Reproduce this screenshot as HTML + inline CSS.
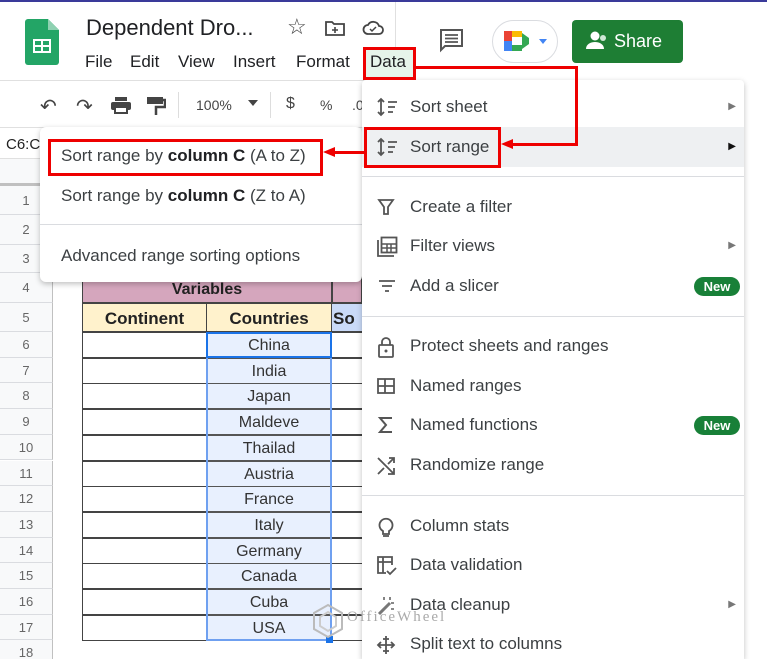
<!DOCTYPE html>
<html><head><meta charset="utf-8"><style>
*{margin:0;padding:0;box-sizing:border-box}
html{width:767px;height:659px;overflow:hidden}
body{width:767px;height:659px;overflow:hidden;background:#fff;font-family:"Liberation Sans",Arial,sans-serif;position:relative;color:#3c4043}
.a{position:absolute}
.mi{position:absolute;left:0;width:382px;height:40px;font-size:17px;color:#3c4043;line-height:40px}
.mi .t{position:absolute;left:48px;top:0}
.mi svg{position:absolute;left:14px;top:10px}
.arr{position:absolute;right:8px;top:0;font-size:10px;color:#777}
.new{position:absolute;left:332px;top:11px;width:46px;height:19px;border-radius:10px;background:#188038;color:#fff;font-size:13px;font-weight:bold;line-height:19px;text-align:center}
.sep{position:absolute;left:0;width:382px;height:1px;background:#dadce0}
.rh{position:absolute;left:0;width:53px;background:#f8f9fa;border-bottom:1px solid #dadce0;border-right:1px solid #c0c0c0;font-size:13px;color:#666;text-align:center}
.cell{position:absolute;font-size:16px;text-align:center;color:#222}
</style></head><body>
<div class="a" style="left:0;top:0;width:767px;height:2px;background:#3a3a9a"></div>
<div class="a" style="left:395px;top:2px;width:1px;height:78px;background:#e0e0e0"></div>
<div class="a" style="left:0;top:80px;width:395px;height:1px;background:#e0e0e0"></div>
<svg class="a" style="left:25px;top:19px" width="34" height="46" viewBox="0 0 34 46"><path d="M3 0h20l11 11v32a3 3 0 0 1-3 3H3a3 3 0 0 1-3-3V3a3 3 0 0 1 3-3z" fill="#23a566"/><path d="M23 0v11h11z" fill="#8ed1b1"/><rect x="8" y="20" width="18" height="14" fill="#fff"/><rect x="10" y="22" width="6" height="4" fill="#23a566"/><rect x="18" y="22" width="6" height="4" fill="#23a566"/><rect x="10" y="28" width="6" height="4" fill="#23a566"/><rect x="18" y="28" width="6" height="4" fill="#23a566"/></svg>
<div class="a" style="left:86px;top:15px;font-size:22px;color:#202124">Dependent Dro...</div>
<div class="a" style="left:287px;top:14px;font-size:22px;color:#444">☆</div>
<svg class="a" style="left:325px;top:20px" width="20" height="16"><path d="M1 2h6l2 2h10v11H1z" fill="none" stroke="#444" stroke-width="1.8"/><path d="M10 7v6M7 10h6" stroke="#444" stroke-width="1.6"/></svg>
<svg class="a" style="left:362px;top:20px" width="22" height="16"><path d="M6 14h11a4 4 0 0 0 0-8 6 6 0 0 0-11-1 4.5 4.5 0 0 0 0 9z" fill="none" stroke="#444" stroke-width="1.8"/><path d="M8 9l2 2 4-4" fill="none" stroke="#444" stroke-width="1.5"/></svg>
<div class="a" style="left:85px;top:52px;font-size:17px;color:#202124">File</div>
<div class="a" style="left:130px;top:52px;font-size:17px;color:#202124">Edit</div>
<div class="a" style="left:178px;top:52px;font-size:17px;color:#202124">View</div>
<div class="a" style="left:233px;top:52px;font-size:17px;color:#202124">Insert</div>
<div class="a" style="left:296px;top:52px;font-size:17px;color:#202124">Format</div>
<div class="a" style="left:364px;top:48px;width:51px;height:31px;background:#e6f4ea"></div>
<div class="a" style="left:370px;top:52px;font-size:17px;color:#202124">Data</div>
<svg class="a" style="left:439px;top:28px" width="26" height="26"><path d="M2 2h21v16H6l-4 4z" fill="none" stroke="#555" stroke-width="2"/><path d="M6 7h13M6 10.5h13M6 14h13" stroke="#555" stroke-width="1.8"/></svg>
<div class="a" style="left:492px;top:20px;width:66px;height:43px;border:1px solid #dadce0;border-radius:22px;background:#fff"></div>
<svg class="a" style="left:503px;top:30px" width="48" height="24"><rect x="1" y="1" width="8" height="10" fill="#ea4335"/><rect x="9" y="1" width="10" height="6" fill="#fbbc04"/><rect x="1" y="11" width="8" height="10" fill="#4285f4"/><rect x="9" y="15" width="10" height="6" fill="#34a853"/><path d="M19 3v16l7-5V8z" fill="#34a853"/><rect x="9" y="7" width="10" height="8" fill="#fff"/><path d="M36 9h8l-4 5z" fill="#4285f4"/></svg>
<div class="a" style="left:572px;top:20px;width:111px;height:43px;background:#1e7e34;border-radius:4px;color:#fff;font-size:18px;line-height:43px;padding-left:42px">Share</div>
<svg class="a" style="left:586px;top:30px" width="24" height="22"><circle cx="9" cy="6" r="4.5" fill="#fff"/><path d="M0 19c0-5 5-7 9-7s9 2 9 7z" fill="#fff"/><circle cx="17" cy="8" r="3" fill="#cfe8d6"/></svg>
<div class="a" style="left:40px;top:94px;font-size:20px;color:#444">↶</div>
<div class="a" style="left:76px;top:94px;font-size:20px;color:#444">↷</div>
<svg class="a" style="left:110px;top:96px" width="22" height="18"><rect x="5" y="1" width="12" height="4" fill="#444"/><rect x="1" y="6" width="20" height="8" rx="2" fill="#444"/><rect x="5" y="11" width="12" height="6" fill="#fff" stroke="#444" stroke-width="2"/></svg>
<svg class="a" style="left:146px;top:96px" width="20" height="20"><rect x="1" y="1" width="16" height="7" fill="#444"/><path d="M17 4h2v7h-9v8" fill="none" stroke="#444" stroke-width="2.5"/></svg>
<div class="a" style="left:178px;top:92px;width:1px;height:26px;background:#ddd"></div>
<div class="a" style="left:196px;top:97px;font-size:14px;color:#444">100%</div>
<div class="a" style="left:248px;top:100px;border:5px solid transparent;border-top:6px solid #444"></div>
<div class="a" style="left:270px;top:92px;width:1px;height:26px;background:#ddd"></div>
<div class="a" style="left:286px;top:95px;font-size:16px;color:#444">$</div>
<div class="a" style="left:320px;top:97px;font-size:14px;color:#444">%</div>
<div class="a" style="left:352px;top:97px;font-size:14px;color:#444">.0</div>
<div class="a" style="left:0;top:127px;width:362px;height:1px;background:#e0e0e0"></div>
<div class="a" style="left:6px;top:136px;font-size:15px;color:#222">C6:C</div>
<div class="a" style="left:0;top:158px;width:362px;height:1px;background:#e0e0e0"></div>
<div class="a" style="left:0;top:159px;width:362px;height:27px;background:#f8f9fa;border-bottom:3px solid #c0c0c0"></div>
<div class="rh" style="top:186px;height:29px;line-height:29px">1</div>
<div class="rh" style="top:215px;height:30px;line-height:30px">2</div>
<div class="rh" style="top:245px;height:28px;line-height:28px">3</div>
<div class="rh" style="top:273px;height:30px;line-height:30px">4</div>
<div class="rh" style="top:303px;height:29px;line-height:29px">5</div>
<div id="rows"></div>
<div class="a" style="left:82px;top:275px;width:280px;height:28px;background:#d5a6bd;border:1.5px solid #444"></div>
<div class="cell" style="left:82px;top:281px;width:250px;font-weight:bold">Variables</div>
<div class="a" style="left:331px;top:275px;width:1.5px;height:28px;background:#444"></div>
<div class="a" style="left:82px;top:303px;width:125px;height:29px;background:#fff2cc;border:1.5px solid #444"></div>
<div class="a" style="left:206px;top:303px;width:126px;height:29px;background:#fff2cc;border:1.5px solid #444"></div>
<div class="a" style="left:331px;top:303px;width:31px;height:29px;background:#c9daf8;border:1.5px solid #444;border-right:none"></div>
<div class="cell" style="left:82px;top:309px;width:125px;font-weight:bold;font-size:17px">Continent</div>
<div class="cell" style="left:206px;top:309px;width:126px;font-weight:bold;font-size:17px">Countries</div>
<div class="cell" style="left:333px;top:309px;font-weight:bold;text-align:left;font-size:17px">So</div>
<script>
var n=["China","India","Japan","Maldeve","Thailad","Austria","France","Italy","Germany","Canada","Cuba","USA"],h="";
for(var i=0;i<13;i++){var y=332+i*25.7;
h+='<div class="rh" style="top:'+y+'px;height:25.7px;line-height:25.7px">'+(i+6)+'</div>';
if(i<12){h+='<div class="a" style="left:82px;top:'+y+'px;width:125px;height:26px;border:1.5px solid #444;background:#fff"></div>';
h+='<div class="a" style="left:206px;top:'+y+'px;width:126px;height:26px;border:1px solid #555;background:#e8f0fe"></div>';
h+='<div class="a" style="left:331px;top:'+y+'px;width:31px;height:26px;border-top:1.5px solid #444;border-bottom:1.5px solid #444"></div>';
h+='<div class="cell" style="left:206px;top:'+(y+5)+'px;width:126px;color:#333">'+n[i]+'</div>';}}
h+='<div class="a" style="left:206px;top:332px;width:126px;height:309px;border:2px solid #6fa0f0"></div>';
h+='<div class="a" style="left:206px;top:332px;width:126px;height:26px;border:2px solid #1a73e8"></div>';
h+='<div class="a" style="left:326px;top:636px;width:7px;height:7px;background:#1a73e8"></div>';
document.getElementById("rows").innerHTML=h;
</script>
<div class="a" style="left:40px;top:127px;width:322px;height:155px;background:#fff;border-radius:6px;box-shadow:0 2px 6px rgba(0,0,0,.25)"></div>
<div class="a" style="left:61px;top:146px;font-size:17px;color:#3c4043">Sort range by <b style="color:#202124">column C</b> (A to Z)</div>
<div class="a" style="left:61px;top:186px;font-size:17px;color:#3c4043">Sort range by <b style="color:#202124">column C</b> (Z to A)</div>
<div class="a" style="left:40px;top:224px;width:322px;height:1px;background:#dadce0"></div>
<div class="a" style="left:61px;top:246px;font-size:17px;color:#3c4043">Advanced range sorting options</div>
<div class="a" style="left:362px;top:80px;width:382px;height:579px;background:#fff;box-shadow:0 2px 6px rgba(0,0,0,.25);border-radius:4px 4px 0 0"></div>
<div class="a" style="left:362px;top:127px;width:382px;height:40px;background:#eef0f2"></div>
<div class="a" style="left:362px;top:80px;width:382px">
<div class="mi" style="top:7px"><svg width="26" height="20"><path d="M5 2v16M2 5l3-3 3 3M2 15l3 3 3-3M12 5h9M12 10h7M12 15h5" fill="none" stroke="#555" stroke-width="1.8"/></svg><span class="t">Sort sheet</span><span class="arr">▶</span></div>
<div class="mi" style="top:47px"><svg width="26" height="20"><path d="M5 2v16M2 5l3-3 3 3M2 15l3 3 3-3M12 5h9M12 10h7M12 15h5" fill="none" stroke="#555" stroke-width="1.8"/></svg><span class="t">Sort range</span><span class="arr" style="color:#111">▶</span></div>
<div class="sep" style="top:96px"></div>
<div class="mi" style="top:107px"><svg width="26" height="20"><path d="M3 3h14l-5 7v7h-4v-7z" fill="none" stroke="#555" stroke-width="1.8"/></svg><span class="t">Create a filter</span></div>
<div class="mi" style="top:146px"><svg width="26" height="22"><path d="M2 4v16h16" fill="none" stroke="#555" stroke-width="1.8"/><rect x="5.5" y="1.5" width="15" height="15" fill="none" stroke="#555" stroke-width="1.8"/><path d="M6 8h14M6 12h14M11 8v9M15 8v9" stroke="#555" stroke-width="1.5"/></svg><span class="t">Filter views</span><span class="arr">▶</span></div>
<div class="mi" style="top:186px"><svg width="26" height="20"><path d="M3 5h16M6 10h10M9 15h4" stroke="#555" stroke-width="1.8"/></svg><span class="t">Add a slicer</span><span class="new">New</span></div>
<div class="sep" style="top:236px"></div>
<div class="mi" style="top:246px"><svg width="26" height="22"><rect x="3" y="9" width="14" height="12" rx="1" fill="none" stroke="#555" stroke-width="1.8"/><path d="M6 9V6a4 4 0 0 1 8 0v3" fill="none" stroke="#555" stroke-width="1.8"/><circle cx="10" cy="15" r="1.5" fill="#555"/></svg><span class="t">Protect sheets and ranges</span></div>
<div class="mi" style="top:286px"><svg width="26" height="20"><rect x="2" y="3" width="16" height="14" fill="none" stroke="#555" stroke-width="1.8"/><path d="M2 10h16M9 3v14" stroke="#555" stroke-width="1.8"/></svg><span class="t">Named ranges</span></div>
<div class="mi" style="top:325px"><svg width="26" height="20"><path d="M16 3H4l6 7-6 7h12" fill="none" stroke="#555" stroke-width="2"/></svg><span class="t">Named functions</span><span class="new">New</span></div>
<div class="mi" style="top:365px"><svg width="26" height="22"><path d="M2 3l16 16M12 19h6v-6M2 19l6-6M12 9l6-6M13 3h5v5" fill="none" stroke="#555" stroke-width="1.8"/></svg><span class="t">Randomize range</span></div>
<div class="sep" style="top:415px"></div>
<div class="mi" style="top:426px"><svg width="26" height="22"><path d="M7 15a6.5 6.5 0 1 1 6 0v3H7z M7 20h6" fill="none" stroke="#555" stroke-width="1.8"/></svg><span class="t">Column stats</span></div>
<div class="mi" style="top:465px"><svg width="26" height="22"><path d="M16 10V2H2v16h8M2 7h14M7 2v16" fill="none" stroke="#555" stroke-width="1.8"/><path d="M11 16l3 3 6-6" fill="none" stroke="#555" stroke-width="1.8"/></svg><span class="t">Data validation</span></div>
<div class="mi" style="top:505px"><svg width="26" height="22"><path d="M3 19l11-11" stroke="#777" stroke-width="3"/><path d="M8 2v3M14 2v3M18 8h-3M18 14h-3" stroke="#777" stroke-width="1.8"/></svg><span class="t">Data cleanup</span><span class="arr">▶</span></div>
<div class="mi" style="top:544px"><svg width="26" height="22"><path d="M10 2v18M2 11h16M5 8l-3 3 3 3M15 8l3 3-3 3M7 5h6M7 17h6" fill="none" stroke="#555" stroke-width="1.8"/></svg><span class="t">Split text to columns</span></div>
</div>
<svg class="a" style="left:310px;top:603px" width="36" height="36"><path d="M18 2l14 8v16l-14 8-14-8V10z" fill="none" stroke="#bbb" stroke-width="2"/><path d="M18 9l8 5v9l-8 5-8-5v-9z" fill="none" stroke="#ccc" stroke-width="2"/></svg>
<div class="a" style="left:347px;top:609px;font-family:'Liberation Serif',serif;font-size:15px;color:#aaa;letter-spacing:2px">OfficeWheel</div>
<div class="a" style="left:363px;top:47px;width:53px;height:33px;border:3px solid #e00"></div>
<div class="a" style="left:364px;top:127px;width:137px;height:41px;border:3px solid #e00"></div>
<div class="a" style="left:48px;top:139px;width:275px;height:37px;border:3px solid #e00"></div>
<div class="a" style="left:416px;top:66px;width:162px;height:3px;background:#e00"></div>
<div class="a" style="left:575px;top:66px;width:3px;height:80px;background:#e00"></div>
<div class="a" style="left:512px;top:143px;width:66px;height:3px;background:#e00"></div>
<div class="a" style="left:501px;top:139px;border:5.5px solid transparent;border-right:12px solid #e00;border-left:0"></div>
<div class="a" style="left:334px;top:151px;width:30px;height:3px;background:#e00"></div>
<div class="a" style="left:323px;top:147px;border:5.5px solid transparent;border-right:12px solid #e00;border-left:0"></div>
</body></html>
